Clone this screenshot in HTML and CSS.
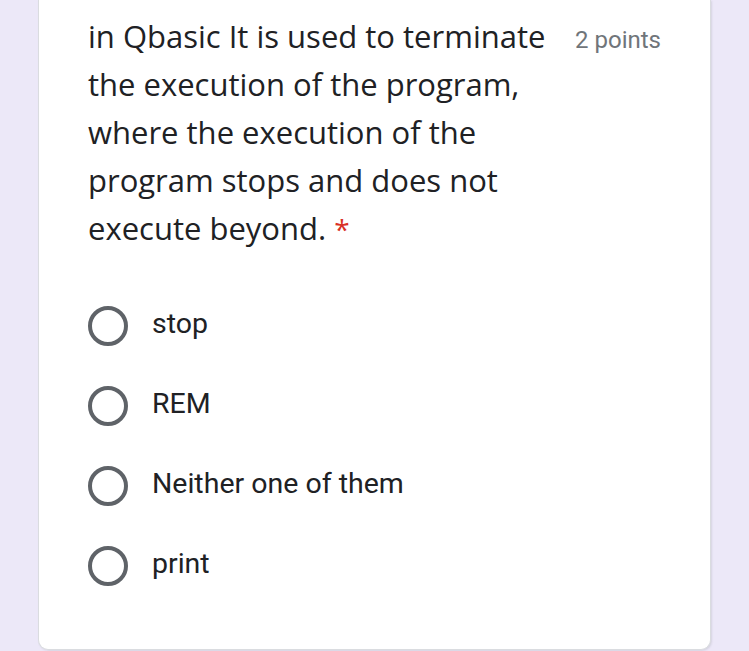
FILE: index.html
```html
<!DOCTYPE html>
<html lang="en">
<head>
<meta charset="utf-8">
<title>Question</title>
<link rel="stylesheet" href="styles.css">
</head>
<body>
  <div class="page">
    <div class="card">
      <div class="header">
        <div class="title">in Qbasic It is used to terminate the execution of the program, where the execution of the program stops and does not execute beyond. <span class="required">*</span></div>
        <div class="points">2 points</div>
      </div>
      <div class="options">
        <label class="option"><span class="radio"></span><span class="label">stop</span></label>
        <label class="option"><span class="radio"></span><span class="label">REM</span></label>
        <label class="option"><span class="radio"></span><span class="label">Neither one of them</span></label>
        <label class="option"><span class="radio"></span><span class="label">print</span></label>
      </div>
    </div>
  </div>
</body>
</html>
```

FILE: styles.css
```css
html, body {
  margin: 0;
  padding: 0;
}
body {
  background: #ece8f8;
  width: 749px;
  height: 651px;
  overflow: hidden;
}
.page {
  padding: 0 38px;
}
.card {
  background: #ffffff;
  border: 1px solid #dadce0;
  border-top: none;
  border-radius: 0 0 10px 10px;
  box-shadow: 1px 1px 2px rgba(60, 64, 67, 0.12);
  padding: 12px 49px 43px 49px;
}
.header {
  display: flex;
  align-items: baseline;
  gap: 14px;
}
.title {
  flex: 1;
  font-family: "Open Sans", "Noto Sans", sans-serif;
  font-size: 31px;
  line-height: 48px;
  color: #202124;
}
.required {
  color: #d93025;
  font-size: 28px;
}
.points {
  font-family: Roboto, "Liberation Sans", sans-serif;
  font-size: 24px;
  color: #70757a;
  white-space: nowrap;
}
.options {
  margin-top: 33px;
  display: flex;
  flex-direction: column;
}
.option {
  display: flex;
  align-items: center;
  height: 80px;
}
.radio {
  box-sizing: border-box;
  width: 40px;
  height: 40px;
  border: 4px solid #5f6368;
  border-radius: 50%;
  flex: none;
}
.label {
  margin-left: 24px;
  padding-bottom: 5px;
  font-family: Roboto, "Liberation Sans", sans-serif;
  font-size: 28.5px;
  color: #202124;
}
```
